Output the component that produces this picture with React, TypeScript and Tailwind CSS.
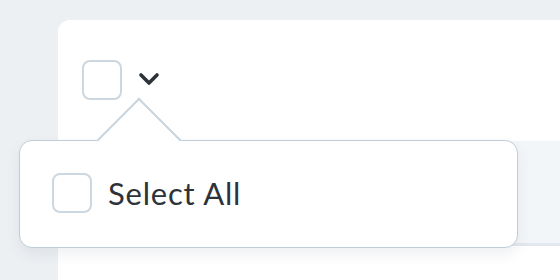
export default function App() {
  return (
    <div
      className="relative h-[280px] w-[560px] overflow-hidden bg-[#edf0f3] pl-[58px] pt-[20px]"
      style={{ fontFamily: "Lato, 'Noto Sans', sans-serif" }}
    >
      <div className="h-[260px] rounded-tl-[12px] bg-white">
        <div className="flex h-[121px] items-start gap-[16px] pl-[24px] pt-[40px]">
          <span className="block h-[40px] w-[40px] rounded-[8px] border-2 border-[#cdd7e0] bg-white" />
          <svg width="22" height="16" viewBox="0 0 22 16" className="mt-[11px]" fill="none">
            <polyline
              points="3,4 11,12 19,4"
              stroke="#2d3339"
              strokeWidth="3.6"
              strokeLinecap="round"
              strokeLinejoin="round"
            />
          </svg>
        </div>
        <div className="h-[105px] border-b-[3px] border-[#e3e8ee] bg-[#f3f6f9]" />
      </div>

      <div className="absolute left-[19px] top-[140px] h-[108px] w-[499px] rounded-[13px] border-[1.5px] border-[#bfcdd8] bg-white shadow-[0_6px_14px_rgba(40,60,80,0.08)]">
        <span className="absolute left-[89px] top-[-31px] h-[60px] w-[60px] rotate-45 border-l-2 border-t-2 border-[#c8d4de] bg-white" />
        <div className="relative flex items-center gap-[16px] pl-[32px] pt-[32px]">
          <span className="block h-[40px] w-[40px] rounded-[8px] border-2 border-[#cdd7e0] bg-white" />
          <span className="text-[31px] leading-[40px] tracking-[0.8px] text-[#2d3339]">Select All</span>
        </div>
      </div>
    </div>
  );
}
